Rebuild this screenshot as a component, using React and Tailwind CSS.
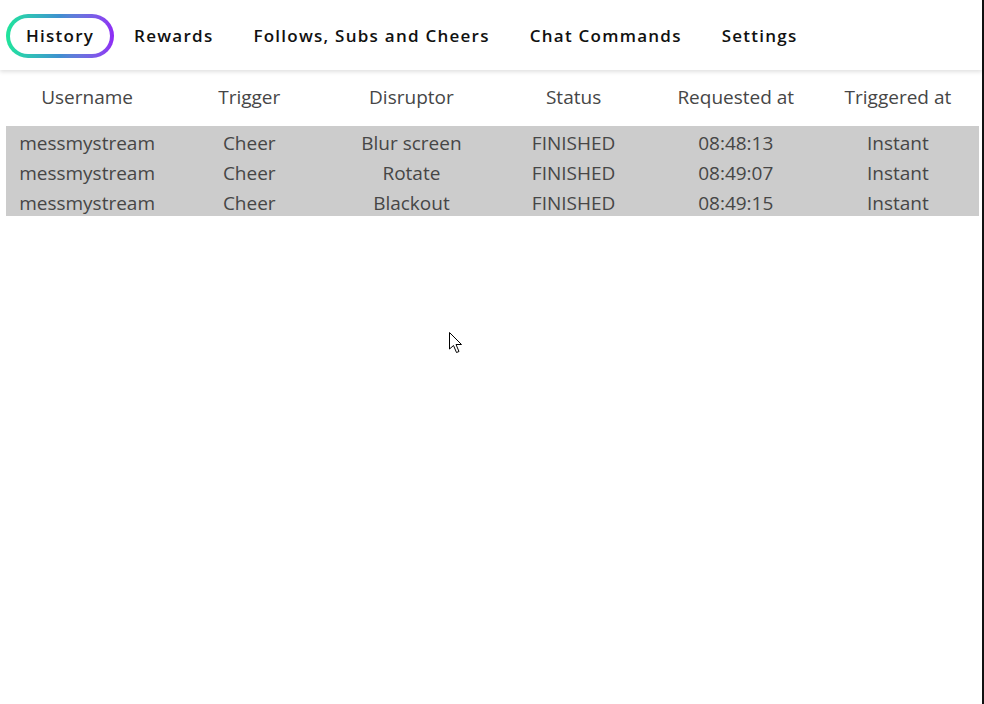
import React from 'react';

const tabs = ['History', 'Rewards', 'Follows, Subs and Cheers', 'Chat Commands', 'Settings'];
const cols = ['Username', 'Trigger', 'Disruptor', 'Status', 'Requested at', 'Triggered at'];
const rows = [
  ['messmystream', 'Cheer', 'Blur screen', 'FINISHED', '08:48:13', 'Instant'],
  ['messmystream', 'Cheer', 'Rotate', 'FINISHED', '08:49:07', 'Instant'],
  ['messmystream', 'Cheer', 'Blackout', 'FINISHED', '08:49:15', 'Instant'],
];

export default function App() {
  return (
    <div className="flex h-[704px] w-[984px] bg-white font-['Open_Sans',sans-serif]">
      <div className="relative w-[982px]">
        {/* Nav */}
        <nav className="flex h-[70px] items-center pl-[6px] pt-[2px] shadow-[0_2px_4px_rgba(0,0,0,0.12)]">
          {tabs.map((t, i) =>
            i === 0 ? (
              <div key={t} className="rounded-full bg-gradient-to-r from-[#1fe59a] via-[#3f8fd0] to-[#8e28f5] p-[4px]">
                <div className="rounded-full bg-white px-[16px] py-[5px] text-[17px] font-semibold tracking-[1.25px] text-[#111]">
                  {t}
                </div>
              </div>
            ) : (
              <div key={t} className="px-[20px] py-[9px] text-[17px] font-semibold tracking-[1.25px] text-[#111]">
                {t}
              </div>
            )
          )}
        </nav>

        {/* Table */}
        <div className="ml-[6px] w-[973px] text-[19px] text-[#464646]">
          <div className="grid h-[56px] grid-cols-6 items-center pb-[2px]">
            {cols.map(c => <div key={c} className="text-center">{c}</div>)}
          </div>
          <div className="bg-[#cccccc]">
            {rows.map((r, i) => (
              <div key={i} className="grid h-[30px] grid-cols-6 items-center">
                {r.map((v, j) => <div key={j} className="pt-[4px] text-center leading-[26px]">{v}</div>)}
              </div>
            ))}
          </div>
        </div>

        {/* mouse cursor */}
        <svg className="absolute left-[449px] top-[332px]" width="16" height="24" viewBox="0 0 16 24">
          <path d="M0.5 0.5 L0.5 17 L4.5 13.5 L7.5 20.5 L10 19.5 L7 12.5 L12.5 12.5 Z" fill="white" stroke="black" strokeWidth="1" />
        </svg>
      </div>
      <div className="h-full w-[2px] bg-[#111]" />
    </div>
  );
}
